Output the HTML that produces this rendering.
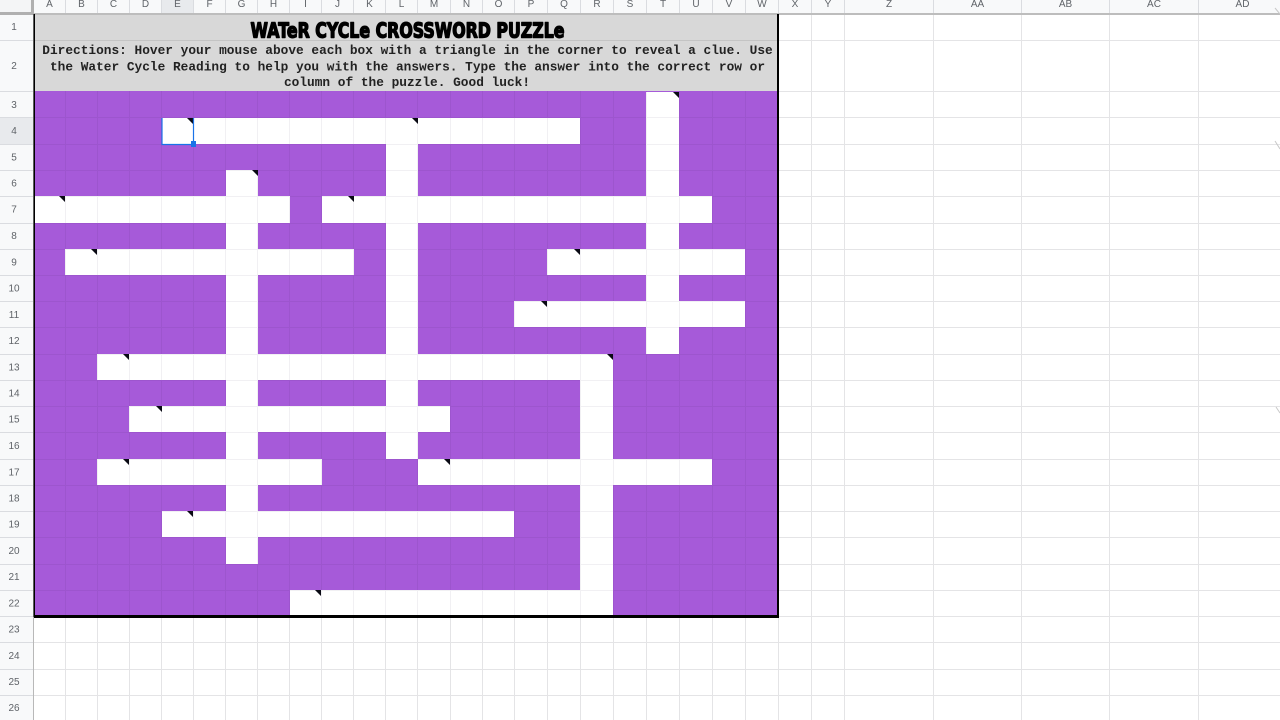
<!DOCTYPE html>
<html lang="en"><head><meta charset="utf-8"><title>Water Cycle Crossword Puzzle</title>
<style>html,body{margin:0;padding:0;background:#fff;width:1280px;height:720px;overflow:hidden}svg{display:block;filter:blur(.3px)}
.h{font:10px "Liberation Sans",sans-serif;fill:#5f6368;text-anchor:middle}
.d{font:bold 12.82px "Liberation Mono",monospace;fill:#222;text-anchor:middle}
</style></head><body>
<svg width="1280" height="720" viewBox="0 0 1280 720" xmlns="http://www.w3.org/2000/svg">
<rect width="1280" height="720" fill="#fff"/>
<rect x="34" y="91" width="744" height="525" fill="#a65ad9"/>
<g fill="#fff">
<rect x="646" y="92" width="33" height="262"/>
<rect x="386" y="144" width="32" height="315"/>
<rect x="226" y="170" width="32" height="394"/>
<rect x="580" y="354" width="33" height="262"/>
<rect x="162" y="118" width="418" height="26"/>
<rect x="34" y="196" width="256" height="27"/>
<rect x="322" y="196" width="390" height="27"/>
<rect x="65" y="249" width="289" height="26"/>
<rect x="547" y="249" width="198" height="26"/>
<rect x="514" y="301" width="231" height="26"/>
<rect x="97" y="354" width="516" height="26"/>
<rect x="129" y="406" width="321" height="26"/>
<rect x="97" y="459" width="225" height="26"/>
<rect x="418" y="459" width="294" height="26"/>
<rect x="162" y="511" width="352" height="26"/>
<rect x="290" y="590" width="323" height="26"/>
</g>
<path style="mix-blend-mode:multiply" fill="none" stroke="#f1f0f3" stroke-width="1" d="M65.5 91V616M97.5 91V616M129.5 91V616M161.5 91V616M193.5 91V616M225.5 91V616M257.5 91V616M289.5 91V616M321.5 91V616M353.5 91V616M385.5 91V616M417.5 91V616M450.5 91V616M482.5 91V616M514.5 91V616M547.5 91V616M580.5 91V616M613.5 91V616M646.5 91V616M679.5 91V616M712.5 91V616M745.5 91V616M34 117.5H778M34 144.5H778M34 170.5H778M34 196.5H778M34 223.5H778M34 249.5H778M34 275.5H778M34 301.5H778M34 327.5H778M34 354.5H778M34 380.5H778M34 406.5H778M34 432.5H778M34 459.5H778M34 485.5H778M34 511.5H778M34 537.5H778M34 564.5H778M34 590.5H778"/>
<path fill="none" stroke="#e4e4e6" stroke-width="1" d="M65.5 616V720M97.5 616V720M129.5 616V720M161.5 616V720M193.5 616V720M225.5 616V720M257.5 616V720M289.5 616V720M321.5 616V720M353.5 616V720M385.5 616V720M417.5 616V720M450.5 616V720M482.5 616V720M514.5 616V720M547.5 616V720M580.5 616V720M613.5 616V720M646.5 616V720M679.5 616V720M712.5 616V720M745.5 616V720M778.5 14V720M811.5 14V720M844.5 14V720M933.5 14V720M1021.5 14V720M1109.5 14V720M1198.5 14V720M778 40.5H1280M778 91.5H1280M778 117.5H1280M778 144.5H1280M778 170.5H1280M778 196.5H1280M778 223.5H1280M778 249.5H1280M778 275.5H1280M778 301.5H1280M778 327.5H1280M778 354.5H1280M778 380.5H1280M778 406.5H1280M778 432.5H1280M778 459.5H1280M778 485.5H1280M778 511.5H1280M778 537.5H1280M778 564.5H1280M778 590.5H1280M34 616.5H1280M34 642.5H1280M34 669.5H1280M34 695.5H1280"/>
<rect x="34" y="14" width="744" height="77" fill="#d8d8d8"/>
<path d="M34 40.5H778" stroke="#c4c4c4" stroke-width="1"/>
<text x="407.5" y="37.5" font-family="DejaVu Sans" font-weight="bold" font-size="20" fill="#000" stroke="#000" stroke-width="1.4" stroke-linejoin="round" text-anchor="middle" textLength="314" lengthAdjust="spacingAndGlyphs">WATeR CYCLe CROSSWORD PUZZLe</text>
<text class="d" x="407.5" y="54">Directions: Hover your mouse above each box with a triangle in the corner to reveal a clue. Use</text>
<text class="d" x="407.5" y="70.5">the Water Cycle Reading to help you with the answers. Type the answer into the correct row or</text>
<text class="d" x="407" y="86">column of the puzzle. Good luck!</text>
<rect x="0" y="0" width="1280" height="14" fill="#f8f9fa"/>
<rect x="0" y="14" width="34" height="706" fill="#f8f9fa"/>
<rect x="162" y="0" width="32" height="14" fill="#e8eaed"/>
<rect x="0" y="118" width="34" height="26" fill="#e8eaed"/>
<path fill="none" stroke="#dadce0" stroke-width="1" d="M65.5 0V14M97.5 0V14M129.5 0V14M161.5 0V14M193.5 0V14M225.5 0V14M257.5 0V14M289.5 0V14M321.5 0V14M353.5 0V14M385.5 0V14M417.5 0V14M450.5 0V14M482.5 0V14M514.5 0V14M547.5 0V14M580.5 0V14M613.5 0V14M646.5 0V14M679.5 0V14M712.5 0V14M745.5 0V14M778.5 0V14M811.5 0V14M844.5 0V14M933.5 0V14M1021.5 0V14M1109.5 0V14M1198.5 0V14M0 40.5H33M0 91.5H33M0 117.5H33M0 144.5H33M0 170.5H33M0 196.5H33M0 223.5H33M0 249.5H33M0 275.5H33M0 301.5H33M0 327.5H33M0 354.5H33M0 380.5H33M0 406.5H33M0 432.5H33M0 459.5H33M0 485.5H33M0 511.5H33M0 537.5H33M0 564.5H33M0 590.5H33M0 616.5H33M0 642.5H33M0 669.5H33M0 695.5H33"/>
<rect x="0" y="13" width="1280" height="2" fill="#bdbdbd"/>
<rect x="33" y="14" width="1" height="706" fill="#b8b8b8"/>
<rect x="0" y="0" width="34" height="14" fill="#f4f5f6"/>
<rect x="31" y="0" width="3" height="15" fill="#b0b0b0"/>
<rect x="0" y="12" width="34" height="3" fill="#b0b0b0"/>
<rect x="33.5" y="14" width="1.5" height="603" fill="#000"/>
<rect x="777" y="14" width="2" height="604" fill="#000"/>
<rect x="34" y="615" width="745" height="3" fill="#000"/>
<path fill="#0a0a14" d="M673 92h6v6zM187 118h6v6zM412 118h6v6zM252 170h6v6zM59 196h6v6zM348 196h6v6zM91 249h6v6zM574 249h6v6zM541 301h6v6zM123 354h6v6zM607 354h6v6zM156 406h6v6zM123 459h6v6zM444 459h6v6zM187 511h6v6zM315 590h6v6z"/>
<path fill="none" stroke="#1a73e8" d="M162 118V144.5H193.5V118" stroke-width="1.2"/>
<rect x="191" y="141" width="5" height="6" fill="#1a73e8"/>
<path stroke="#c8c8c8" stroke-width="1" fill="none" d="M1275 8L1280 14M1275 141L1280 149M1276 407L1280 413"/>
<g class="h">
<text x="49.5" y="7">A</text><text x="81.5" y="7">B</text><text x="113.5" y="7">C</text><text x="145.5" y="7">D</text><text x="177.5" y="7">E</text><text x="209.5" y="7">F</text><text x="241.5" y="7">G</text><text x="273.5" y="7">H</text><text x="305.5" y="7">I</text><text x="337.5" y="7">J</text><text x="369.5" y="7">K</text><text x="401.5" y="7">L</text><text x="434" y="7">M</text><text x="466.5" y="7">N</text><text x="498.5" y="7">O</text><text x="531" y="7">P</text><text x="564" y="7">Q</text><text x="597" y="7">R</text><text x="630" y="7">S</text><text x="663" y="7">T</text><text x="696" y="7">U</text><text x="729" y="7">V</text><text x="762" y="7">W</text><text x="795" y="7">X</text><text x="828" y="7">Y</text><text x="889" y="7">Z</text><text x="977.5" y="7">AA</text><text x="1065.5" y="7">AB</text><text x="1154" y="7">AC</text><text x="1242.5" y="7">AD</text>
<text x="14" y="30">1</text><text x="14" y="69">2</text><text x="14" y="108">3</text><text x="14" y="134">4</text><text x="14" y="160.5">5</text><text x="14" y="186.5">6</text><text x="14" y="212.5">7</text><text x="14" y="239">8</text><text x="14" y="265.5">9</text><text x="14" y="291.5">10</text><text x="14" y="318">11</text><text x="14" y="344">12</text><text x="14" y="370.5">13</text><text x="14" y="396.5">14</text><text x="14" y="422.5">15</text><text x="14" y="449">16</text><text x="14" y="475.5">17</text><text x="14" y="501.5">18</text><text x="14" y="527.5">19</text><text x="14" y="554">20</text><text x="14" y="580">21</text><text x="14" y="606.5">22</text><text x="14" y="632.5">23</text><text x="14" y="659">24</text><text x="14" y="685">25</text><text x="14" y="711">26</text>
</g>
</svg>
</body></html>
